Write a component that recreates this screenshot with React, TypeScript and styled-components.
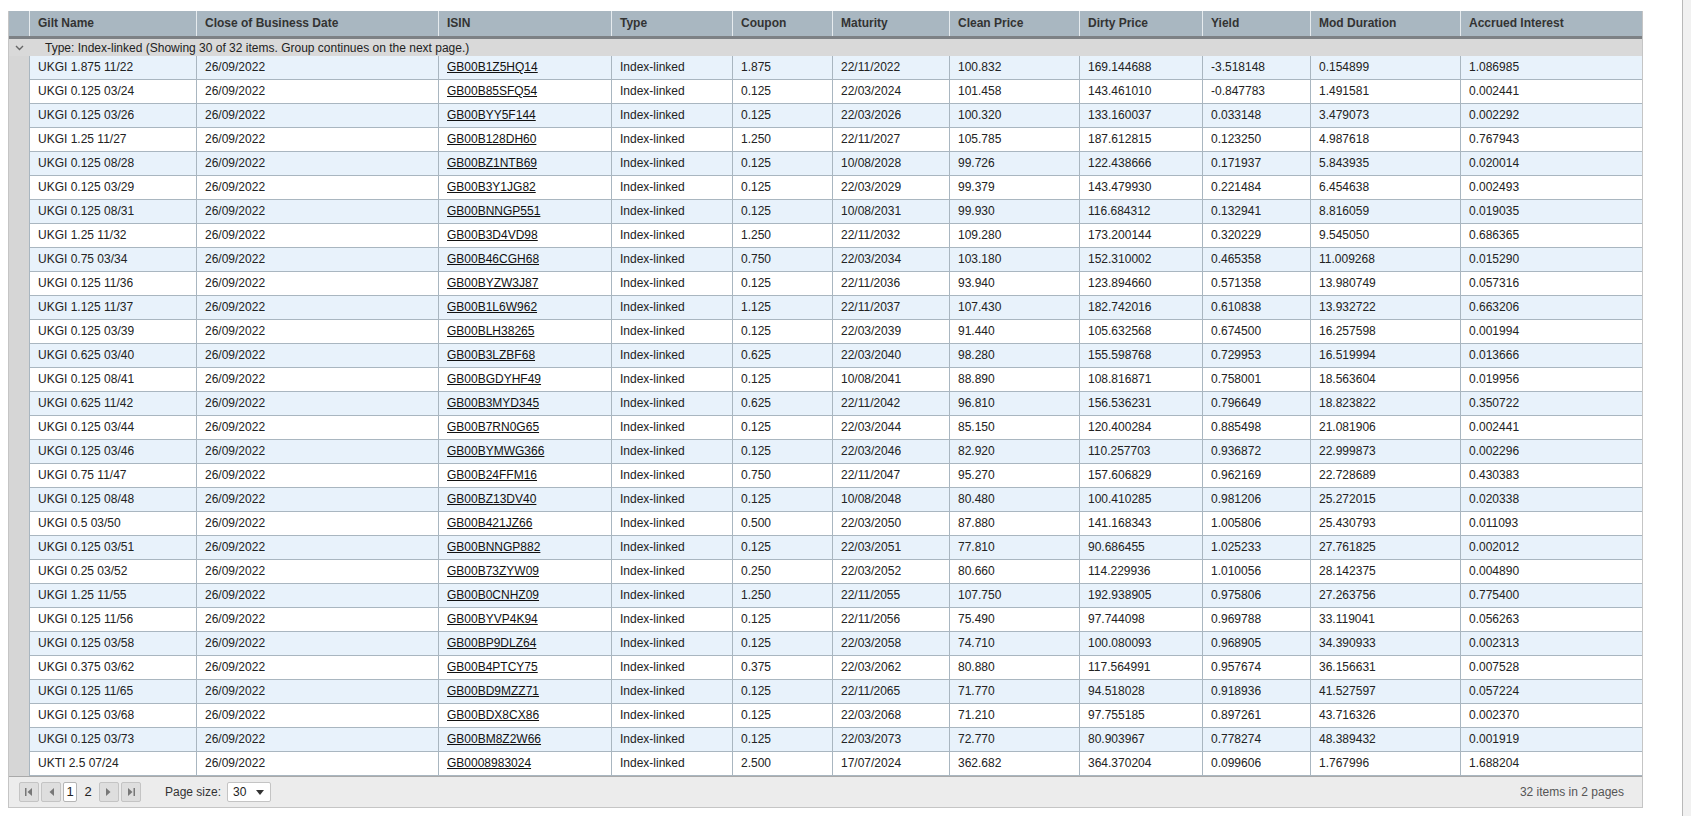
import styled, { createGlobalStyle } from "styled-components";

const GlobalStyle = createGlobalStyle`
  html, body { margin: 0; padding: 0; background: #fff; }
  body { font-family: "Liberation Sans", Arial, sans-serif; font-size: 12px; color: #222; }
`;

const cols = [167, 242, 173, 121, 100, 117, 130, 123, 108, 150, 182];
const headers = [
  "Gilt Name",
  "Close of Business Date",
  "ISIN",
  "Type",
  "Coupon",
  "Maturity",
  "Clean Price",
  "Dirty Price",
  "Yield",
  "Mod Duration",
  "Accrued Interest",
];
const template = `20px ${cols.map((c) => c + "px").join(" ")}`;

const raw = `UKGI 1.875 11/22|GB00B1Z5HQ14|1.875|22/11/2022|100.832|169.144688|-3.518148|0.154899|1.086985
UKGI 0.125 03/24|GB00B85SFQ54|0.125|22/03/2024|101.458|143.461010|-0.847783|1.491581|0.002441
UKGI 0.125 03/26|GB00BYY5F144|0.125|22/03/2026|100.320|133.160037|0.033148|3.479073|0.002292
UKGI 1.25 11/27|GB00B128DH60|1.250|22/11/2027|105.785|187.612815|0.123250|4.987618|0.767943
UKGI 0.125 08/28|GB00BZ1NTB69|0.125|10/08/2028|99.726|122.438666|0.171937|5.843935|0.020014
UKGI 0.125 03/29|GB00B3Y1JG82|0.125|22/03/2029|99.379|143.479930|0.221484|6.454638|0.002493
UKGI 0.125 08/31|GB00BNNGP551|0.125|10/08/2031|99.930|116.684312|0.132941|8.816059|0.019035
UKGI 1.25 11/32|GB00B3D4VD98|1.250|22/11/2032|109.280|173.200144|0.320229|9.545050|0.686365
UKGI 0.75 03/34|GB00B46CGH68|0.750|22/03/2034|103.180|152.310002|0.465358|11.009268|0.015290
UKGI 0.125 11/36|GB00BYZW3J87|0.125|22/11/2036|93.940|123.894660|0.571358|13.980749|0.057316
UKGI 1.125 11/37|GB00B1L6W962|1.125|22/11/2037|107.430|182.742016|0.610838|13.932722|0.663206
UKGI 0.125 03/39|GB00BLH38265|0.125|22/03/2039|91.440|105.632568|0.674500|16.257598|0.001994
UKGI 0.625 03/40|GB00B3LZBF68|0.625|22/03/2040|98.280|155.598768|0.729953|16.519994|0.013666
UKGI 0.125 08/41|GB00BGDYHF49|0.125|10/08/2041|88.890|108.816871|0.758001|18.563604|0.019956
UKGI 0.625 11/42|GB00B3MYD345|0.625|22/11/2042|96.810|156.536231|0.796649|18.823822|0.350722
UKGI 0.125 03/44|GB00B7RN0G65|0.125|22/03/2044|85.150|120.400284|0.885498|21.081906|0.002441
UKGI 0.125 03/46|GB00BYMWG366|0.125|22/03/2046|82.920|110.257703|0.936872|22.999873|0.002296
UKGI 0.75 11/47|GB00B24FFM16|0.750|22/11/2047|95.270|157.606829|0.962169|22.728689|0.430383
UKGI 0.125 08/48|GB00BZ13DV40|0.125|10/08/2048|80.480|100.410285|0.981206|25.272015|0.020338
UKGI 0.5 03/50|GB00B421JZ66|0.500|22/03/2050|87.880|141.168343|1.005806|25.430793|0.011093
UKGI 0.125 03/51|GB00BNNGP882|0.125|22/03/2051|77.810|90.686455|1.025233|27.761825|0.002012
UKGI 0.25 03/52|GB00B73ZYW09|0.250|22/03/2052|80.660|114.229936|1.010056|28.142375|0.004890
UKGI 1.25 11/55|GB00B0CNHZ09|1.250|22/11/2055|107.750|192.938905|0.975806|27.263756|0.775400
UKGI 0.125 11/56|GB00BYVP4K94|0.125|22/11/2056|75.490|97.744098|0.969788|33.119041|0.056263
UKGI 0.125 03/58|GB00BP9DLZ64|0.125|22/03/2058|74.710|100.080093|0.968905|34.390933|0.002313
UKGI 0.375 03/62|GB00B4PTCY75|0.375|22/03/2062|80.880|117.564991|0.957674|36.156631|0.007528
UKGI 0.125 11/65|GB00BD9MZZ71|0.125|22/11/2065|71.770|94.518028|0.918936|41.527597|0.057224
UKGI 0.125 03/68|GB00BDX8CX86|0.125|22/03/2068|71.210|97.755185|0.897261|43.716326|0.002370
UKGI 0.125 03/73|GB00BM8Z2W66|0.125|22/03/2073|72.770|80.903967|0.778274|48.389432|0.001919
UKTI 2.5 07/24|GB0008983024|2.500|17/07/2024|362.682|364.370204|0.099606|1.767996|1.688204`;

const rows = raw.split("\n").map((l) => l.split("|"));

const Page = styled.div`
  display: flex;
  height: 816px;
  overflow: hidden;
`;

const Main = styled.div`
  flex: 1;
  padding: 11px 0 0 8px;
`;

const Strip = styled.div`
  width: 8px;
  border-left: 1px solid #b9b9b9;
  background: #f1f1f1;
`;

const Grid = styled.div`
  width: 1633px;
  border: 1px solid #c5c5c5;
  border-top: none;
`;

const HeaderRow = styled.div`
  display: grid;
  grid-template-columns: ${template};
  background: #a9b7c1;
  border-bottom: 3px solid #7d8185;
`;

const HeadCell = styled.div<{ first?: boolean }>`
  height: 25px;
  line-height: 25px;
  padding-left: 8px;
  font-weight: bold;
  color: #333;
  border-left: ${(p) => (p.first ? "none" : "1px solid #e6ebee")};
  white-space: nowrap;
`;

const GroupRow = styled.div`
  display: flex;
  align-items: center;
  height: 17px;
  background: #d9d9d9;
  color: #222;
`;

const Chevron = styled.span`
  width: 20px;
  display: flex;
  justify-content: center;
  svg { display: block; }
`;

const GroupText = styled.span`
  padding-left: 16px;
`;

const Row = styled.div<{ alt: boolean }>`
  display: grid;
  grid-template-columns: ${template};
  background: ${(p) => (p.alt ? "#e8f2fb" : "#fff")};
`;

const Indent = styled.div`
  background: #d6d6d6;
`;

const Cell = styled.div`
  height: 23px;
  line-height: 23px;
  padding-left: 8px;
  border-left: 1px solid #a9b6c0;
  border-bottom: 1px solid #a9b6c0;
  white-space: nowrap;
  overflow: hidden;
`;

const Link = styled.a`
  color: #111;
  text-decoration: underline;
`;

const Pager = styled.div`
  display: flex;
  align-items: center;
  height: 30px;
  background: #ececec;
  border-top: 1px solid #a9a9a9;
  padding: 0 10px;
`;

const NavBtn = styled.span`
  width: 20px;
  height: 20px;
  box-sizing: border-box;
  border: 1px solid #c4c4c4;
  border-radius: 2px;
  background: #dedede;
  display: flex;
  align-items: center;
  justify-content: center;
  margin-right: 2px;
`;

const PageNum = styled.span<{ active?: boolean }>`
  min-width: 14px;
  height: 20px;
  line-height: 18px;
  box-sizing: border-box;
  text-align: center;
  font-size: 13px;
  margin-right: 4px;
  background: ${(p) => (p.active ? "#fff" : "transparent")};
  border: ${(p) => (p.active ? "1px solid #b5b5b5" : "1px solid transparent")};
  border-radius: 2px;
`;

const SizeLabel = styled.span`
  margin-left: 22px;
  margin-right: 6px;
  color: #333;
`;

const Select = styled.span`
  width: 44px;
  height: 20px;
  box-sizing: border-box;
  border: 1px solid #c4c4c4;
  border-radius: 2px;
  background: #fff;
  display: flex;
  align-items: center;
  justify-content: space-between;
  padding: 0 6px 0 5px;
  font-size: 12px;
`;

const Info = styled.span`
  margin-left: auto;
  color: #555;
  padding-right: 8px;
`;

const Arrow = ({ dir, bar }: { dir: "l" | "r"; bar?: boolean }) => (
  <svg width="10" height="10" viewBox="0 0 10 10">
    {dir === "l" ? (
      <>
        {bar && <rect x="1" y="1" width="1.5" height="8" fill="#777" />}
        <polygon points="8,1 3.5,5 8,9" fill="#777" />
      </>
    ) : (
      <>
        <polygon points="2,1 6.5,5 2,9" fill="#777" />
        {bar && <rect x="7.5" y="1" width="1.5" height="8" fill="#777" />}
      </>
    )}
  </svg>
);

export default function App() {
  return (
    <>
      <GlobalStyle />
      <Page>
        <Main>
          <Grid>
            <HeaderRow>
              <HeadCell first />
              {headers.map((h) => (
                <HeadCell key={h}>{h}</HeadCell>
              ))}
            </HeaderRow>
            <GroupRow>
              <Chevron>
                <svg width="9" height="6" viewBox="0 0 9 6">
                  <polyline points="1,1 4.5,4.5 8,1" fill="none" stroke="#666" strokeWidth="1.4" />
                </svg>
              </Chevron>
              <GroupText>
                Type: Index-linked (Showing 30 of 32 items. Group continues on the next page.)
              </GroupText>
            </GroupRow>
            {rows.map((r, i) => (
              <Row key={r[1]} alt={i % 2 === 0 && i < 29}>
                <Indent />
                <Cell>{r[0]}</Cell>
                <Cell>26/09/2022</Cell>
                <Cell>
                  <Link>{r[1]}</Link>
                </Cell>
                <Cell>Index-linked</Cell>
                {r.slice(2).map((v, j) => (
                  <Cell key={j}>{v}</Cell>
                ))}
              </Row>
            ))}
            <Pager>
              <NavBtn><Arrow dir="l" bar /></NavBtn>
              <NavBtn><Arrow dir="l" /></NavBtn>
              <PageNum active>1</PageNum>
              <PageNum>2</PageNum>
              <NavBtn><Arrow dir="r" /></NavBtn>
              <NavBtn><Arrow dir="r" bar /></NavBtn>
              <SizeLabel>Page size:</SizeLabel>
              <Select>
                30
                <svg width="8" height="5" viewBox="0 0 8 5">
                  <polygon points="0,0 8,0 4,5" fill="#333" />
                </svg>
              </Select>
              <Info>32 items in 2 pages</Info>
            </Pager>
          </Grid>
        </Main>
        <Strip />
      </Page>
    </>
  );
}
